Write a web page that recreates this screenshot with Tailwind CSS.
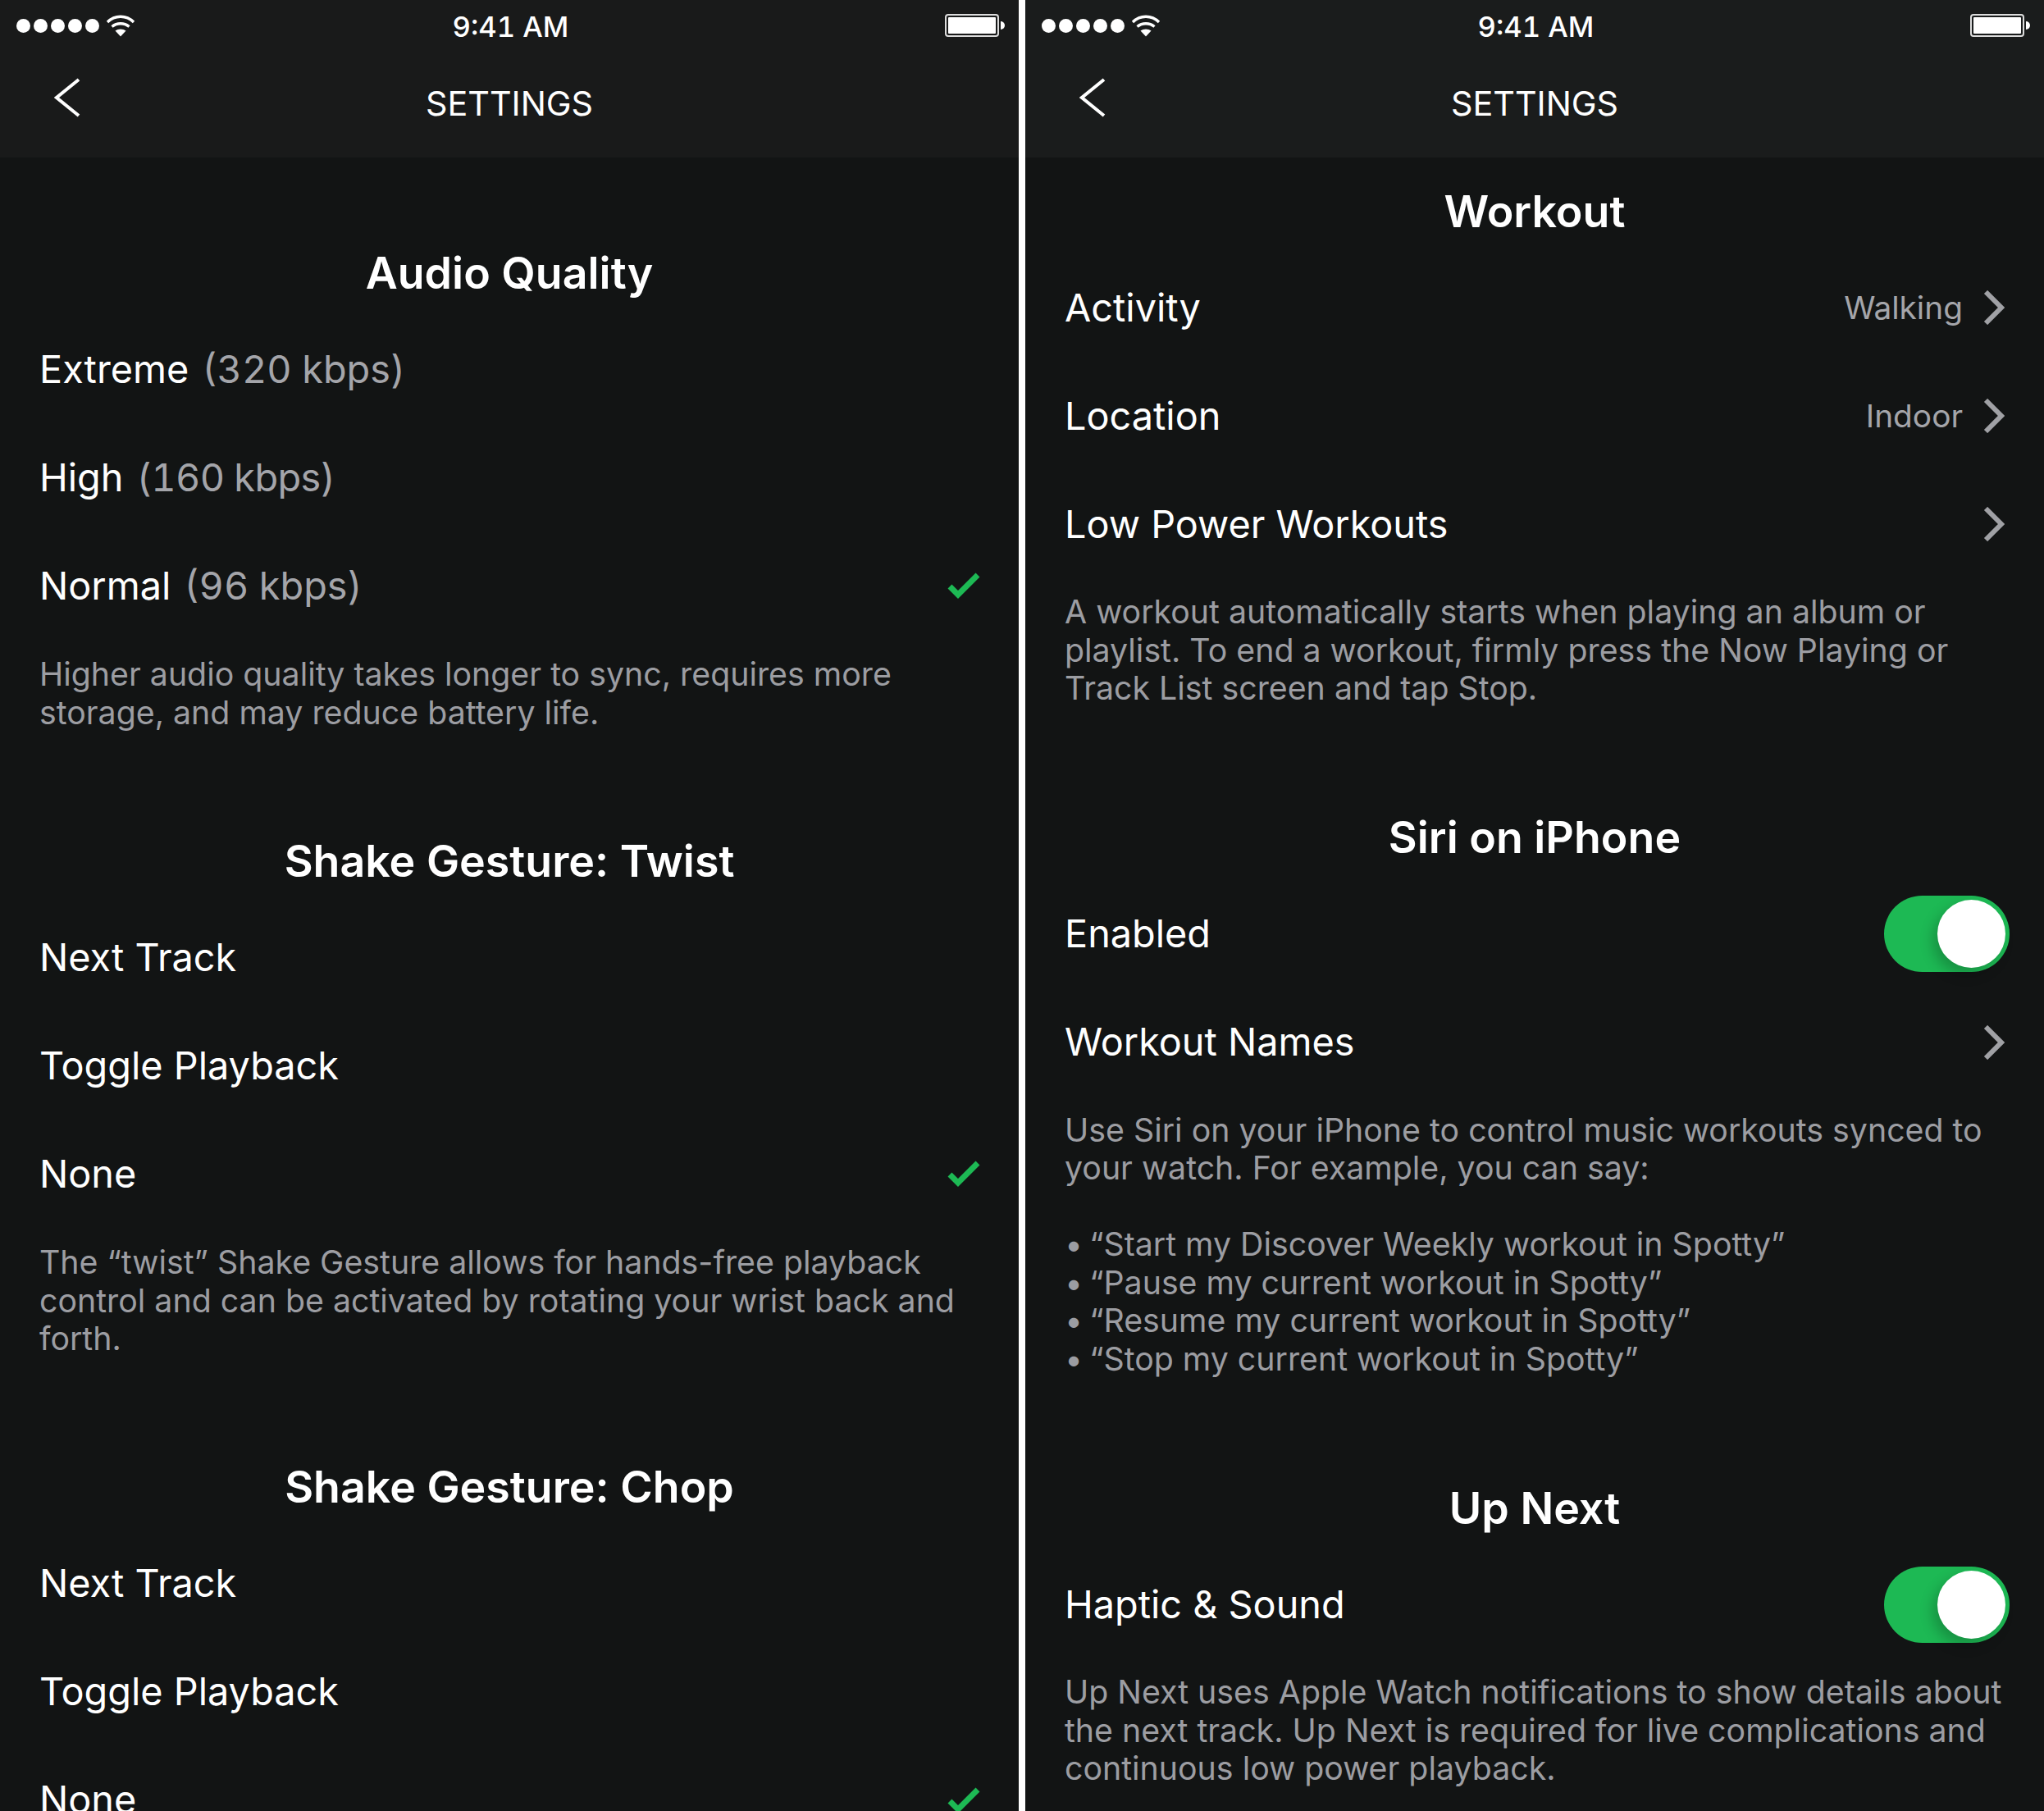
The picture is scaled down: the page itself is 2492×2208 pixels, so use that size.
<!DOCTYPE html>
<html lang="en">

<head>
    <meta charset="UTF-8" />
    <title>Settings</title>
    <script src="https://cdn.jsdelivr.net/npm/@tailwindcss/browser@4"></script>
</head>

<body class="bg-white font-[Inter,sans-serif] text-white">
    <div class="flex w-[2492px] h-[2208px] gap-[8px] overflow-hidden">

        <!-- Left screen -->
        <div class="w-[1242px] h-[2208px] bg-[#121414] overflow-hidden">
            <header class="h-[192px] bg-[#191a1a]">
                <div class="h-[64px] grid grid-cols-[1fr_auto_1fr] items-center pl-[20px] pr-[17px]">
                    <div class="flex items-center gap-[8px] -mt-[2px]">
                        <div class="flex gap-[4px]">
                            <span class="w-[17px] h-[17px] rounded-full bg-white"></span>
                            <span class="w-[17px] h-[17px] rounded-full bg-white"></span>
                            <span class="w-[17px] h-[17px] rounded-full bg-white"></span>
                            <span class="w-[17px] h-[17px] rounded-full bg-white"></span>
                            <span class="w-[17px] h-[17px] rounded-full bg-white"></span>
                        </div>
                        <svg width="36" height="27" viewBox="0 0 36 27" fill="none" stroke="#fff" stroke-width="3.4">
                            <path d="M2 9 C11 0 25 0 34 9" />
                            <path d="M7.5 14.5 C13.500 9.500 22.500 9.500 28.500 14.500" />
                            <path d="M18 26.500 L11.500 19.500 C15 16.800 21 16.800 24.500 19.500 Z" fill="#fff" stroke="none" />
                        </svg>
                    </div>
                    <div class="text-[34.6px] font-medium tabular-nums leading-[64px] text-center">9:41 AM</div>
                    <div class="flex justify-end items-center gap-[2px] -mt-[2px]">
                        <div class="w-[66px] h-[28px] rounded-[4px] border-[2px] border-[#dcdcdc] p-[2px]">
                            <div class="w-full h-full bg-white rounded-[1px]"></div>
                        </div>
                        <div class="w-[5px] h-[10px] bg-white rounded-r-full"></div>
                    </div>
                </div>
                <div class="h-[128px] grid grid-cols-[1fr_auto_1fr] items-center px-[66px] -mt-[1px]">
                    <svg width="32" height="48" viewBox="0 0 32 48" fill="none" stroke="#fff" stroke-width="4" class="-mt-[16px]">
                        <path d="M30 2 L3 24 L30 46" />
                    </svg>
                    <div class="text-[41.3px] text-center">SETTINGS</div>
                    <div></div>
                </div>
            </header>

            <main class="pt-[89px]">
                <h2 class="h-[104px] flex items-center justify-center text-[53.7px] font-semibold">Audio Quality</h2>
                <div class="-mt-[1px] h-[132px] flex items-center px-[48px] text-[46.8px]">Extreme<span class="ml-[16px] tabular-nums text-[#a4a5aa]">(320 kbps)</span></div>
                <div class="h-[132px] flex items-center px-[48px] text-[46.8px]">High<span class="ml-[16px] tabular-nums tracking-[-0.6px] text-[#a4a5aa]">(160 kbps)</span></div>
                <div class="h-[132px] flex items-center justify-between pl-[48px] pr-[47px] text-[46.8px]">
                    <div>Normal<span class="ml-[16px] tabular-nums text-[#a4a5aa]">(96 kbps)</span></div>
                    <svg width="40" height="32" viewBox="0 0 40 32" fill="none" stroke="#1db954" stroke-width="7"><path d="M3 17 L13 27 L37 3" /></svg>
                </div>
                <p class="px-[48px] pt-[19px] text-[39.3px] leading-[46.5px] text-[#9c9da2]">Higher audio quality takes longer to sync, requires more<br>storage, and may reduce battery life.</p>

                <h2 class="mt-[106px] h-[104px] flex items-center justify-center text-[53.7px] font-semibold">Shake Gesture: Twist</h2>
                <div class="-mt-[1px] h-[132px] flex items-center px-[48px] text-[46.8px]">Next Track</div>
                <div class="h-[132px] flex items-center px-[48px] text-[46.8px]">Toggle Playback</div>
                <div class="h-[132px] flex items-center justify-between pl-[48px] pr-[47px] text-[46.8px]">
                    <div>None</div>
                    <svg width="40" height="32" viewBox="0 0 40 32" fill="none" stroke="#1db954" stroke-width="7"><path d="M3 17 L13 27 L37 3" /></svg>
                </div>
                <p class="px-[48px] pt-[19px] text-[39.3px] leading-[46.5px] text-[#9c9da2]">The “twist” Shake Gesture allows for hands-free playback<br>control and can be activated by rotating your wrist back and<br>forth.</p>

                <h2 class="mt-[106px] h-[104px] flex items-center justify-center text-[53.7px] font-semibold">Shake Gesture: Chop</h2>
                <div class="-mt-[1px] h-[132px] flex items-center px-[48px] text-[46.8px]">Next Track</div>
                <div class="h-[132px] flex items-center px-[48px] text-[46.8px]">Toggle Playback</div>
                <div class="h-[132px] flex items-center justify-between pl-[48px] pr-[47px] text-[46.8px]">
                    <div>None</div>
                    <svg width="40" height="32" viewBox="0 0 40 32" fill="none" stroke="#1db954" stroke-width="7"><path d="M3 17 L13 27 L37 3" /></svg>
                </div>
            </main>
        </div>

        <!-- Right screen -->
        <div class="w-[1242px] h-[2208px] bg-[#121414] overflow-hidden">
            <header class="h-[192px] bg-[#1a1c1c]">
                <div class="h-[64px] grid grid-cols-[1fr_auto_1fr] items-center pl-[20px] pr-[17px]">
                    <div class="flex items-center gap-[8px] -mt-[2px]">
                        <div class="flex gap-[4px]">
                            <span class="w-[17px] h-[17px] rounded-full bg-white"></span>
                            <span class="w-[17px] h-[17px] rounded-full bg-white"></span>
                            <span class="w-[17px] h-[17px] rounded-full bg-white"></span>
                            <span class="w-[17px] h-[17px] rounded-full bg-white"></span>
                            <span class="w-[17px] h-[17px] rounded-full bg-white"></span>
                        </div>
                        <svg width="36" height="27" viewBox="0 0 36 27" fill="none" stroke="#fff" stroke-width="3.4">
                            <path d="M2 9 C11 0 25 0 34 9" />
                            <path d="M7.5 14.5 C13.500 9.500 22.500 9.500 28.500 14.500" />
                            <path d="M18 26.500 L11.500 19.500 C15 16.800 21 16.800 24.500 19.500 Z" fill="#fff" stroke="none" />
                        </svg>
                    </div>
                    <div class="text-[34.6px] font-medium tabular-nums leading-[64px] text-center">9:41 AM</div>
                    <div class="flex justify-end items-center gap-[2px] -mt-[2px]">
                        <div class="w-[66px] h-[28px] rounded-[4px] border-[2px] border-[#dcdcdc] p-[2px]">
                            <div class="w-full h-full bg-white rounded-[1px]"></div>
                        </div>
                        <div class="w-[5px] h-[10px] bg-white rounded-r-full"></div>
                    </div>
                </div>
                <div class="h-[128px] grid grid-cols-[1fr_auto_1fr] items-center px-[66px] -mt-[1px]">
                    <svg width="32" height="48" viewBox="0 0 32 48" fill="none" stroke="#fff" stroke-width="4" class="-mt-[16px]">
                        <path d="M30 2 L3 24 L30 46" />
                    </svg>
                    <div class="text-[41.3px] text-center">SETTINGS</div>
                    <div></div>
                </div>
            </header>

            <main class="pt-[14px]">
                <h2 class="h-[104px] flex items-center justify-center text-[53.7px] font-semibold">Workout</h2>
                <div class="-mt-[1px] h-[132px] flex items-center justify-between pl-[48px] pr-[48px] text-[46.8px]">
                    <div>Activity</div>
                    <div class="flex items-center gap-[25px] text-[38.8px] text-[#a4a5aa]">Walking
                        <svg width="26" height="42" viewBox="0 0 26 42" fill="none" stroke="#a0a1a5" stroke-width="6"><path d="M3 2 L22 21 L3 40" /></svg>
                    </div>
                </div>
                <div class="h-[132px] flex items-center justify-between pl-[48px] pr-[48px] text-[46.8px]">
                    <div>Location</div>
                    <div class="flex items-center gap-[25px] text-[38.8px] text-[#a4a5aa]">Indoor
                        <svg width="26" height="42" viewBox="0 0 26 42" fill="none" stroke="#a0a1a5" stroke-width="6"><path d="M3 2 L22 21 L3 40" /></svg>
                    </div>
                </div>
                <div class="h-[132px] flex items-center justify-between pl-[48px] pr-[48px] text-[46.8px]">
                    <div>Low Power Workouts</div>
                    <svg width="26" height="42" viewBox="0 0 26 42" fill="none" stroke="#a0a1a5" stroke-width="6"><path d="M3 2 L22 21 L3 40" /></svg>
                </div>
                <p class="px-[48px] pt-[18px] text-[39.3px] leading-[46.5px] text-[#9c9da2]">A workout automatically starts when playing an album or<br>playlist. To end a workout, firmly press the Now Playing or<br>Track List screen and tap Stop.</p>

                <h2 class="mt-[107px] h-[104px] flex items-center justify-center text-[53.7px] font-semibold">Siri on iPhone</h2>
                <div class="-mt-[1px] h-[132px] flex items-center justify-between pl-[48px] pr-[42px] text-[46.8px]">
                    <div>Enabled</div>
                    <div class="w-[153px] h-[93px] rounded-full bg-[#1db954] flex items-center justify-end pr-[5px]">
                        <div class="w-[83px] h-[83px] rounded-full bg-white shadow-[-6px_8px_16px_rgba(0,0,0,0.22)]"></div>
                    </div>
                </div>
                <div class="h-[132px] flex items-center justify-between pl-[48px] pr-[48px] text-[46.8px]">
                    <div>Workout Names</div>
                    <svg width="26" height="42" viewBox="0 0 26 42" fill="none" stroke="#a0a1a5" stroke-width="6"><path d="M3 2 L22 21 L3 40" /></svg>
                </div>
                <p class="px-[48px] pt-[18px] text-[39.3px] leading-[46.5px] text-[#9c9da2]">Use Siri on your iPhone to control music workouts synced to<br>your watch. For example, you can say:<br><br><span class="[word-spacing:-3px]">• </span>“Start my Discover Weekly workout in Spotty”<br><span class="[word-spacing:-3px]">• </span>“Pause my current workout in Spotty”<br><span class="[word-spacing:-3px]">• </span>“Resume my current workout in Spotty”<br><span class="[word-spacing:-3px]">• </span>“Stop my current workout in Spotty”</p>

                <h2 class="mt-[107px] h-[104px] flex items-center justify-center text-[53.7px] font-semibold">Up Next</h2>
                <div class="-mt-[1px] h-[132px] flex items-center justify-between pl-[48px] pr-[42px] text-[46.8px]">
                    <div>Haptic &amp; Sound</div>
                    <div class="w-[153px] h-[93px] rounded-full bg-[#1db954] flex items-center justify-end pr-[5px]">
                        <div class="w-[83px] h-[83px] rounded-full bg-white shadow-[-6px_8px_16px_rgba(0,0,0,0.22)]"></div>
                    </div>
                </div>
                <p class="px-[48px] pt-[18px] text-[39.3px] leading-[46.5px] text-[#9c9da2] whitespace-nowrap">Up Next uses Apple Watch notifications to show details about<br>the next track. Up Next is required for live complications and<br>continuous low power playback.</p>
            </main>
        </div>
    </div>
</body>

</html>
